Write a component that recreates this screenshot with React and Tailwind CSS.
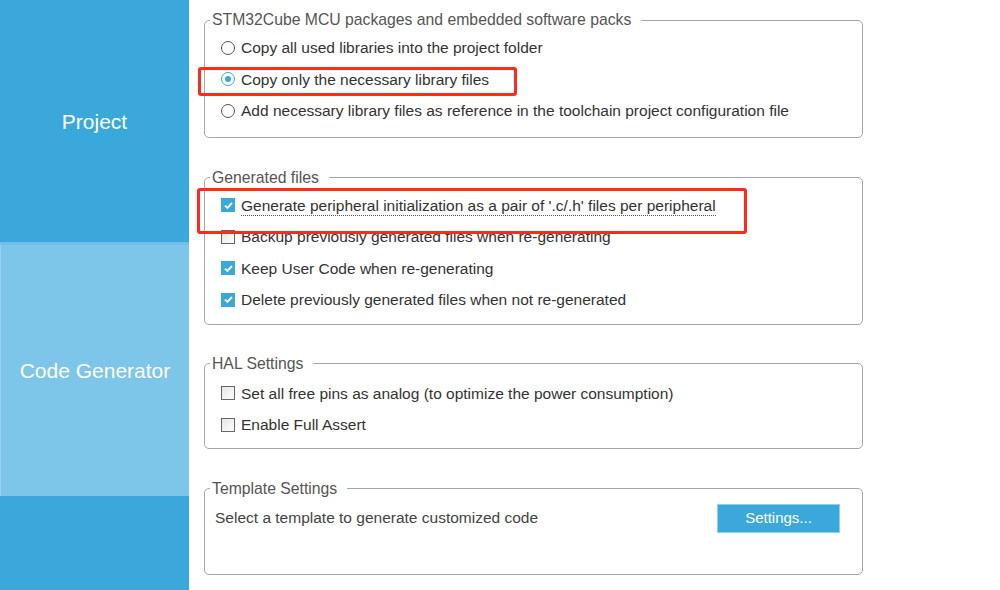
import React from "react";

const font = { fontFamily: '"Liberation Sans", Arial, sans-serif' };

function Radio({ checked }) {
  return (
    <span
      className={
        "flex h-[14px] w-[14px] shrink-0 items-center justify-center rounded-full border-[1.5px] bg-white " +
        (checked ? "border-[#3aa8db]" : "border-[#555]")
      }
    >
      {checked && <span className="h-[6px] w-[6px] rounded-full bg-[#3aa8db]" />}
    </span>
  );
}

function Check({ checked }) {
  if (checked) {
    return (
      <span className="flex h-[14px] w-[14px] shrink-0 items-center justify-center bg-[#3aa8db]">
        <svg width="11" height="11" viewBox="0 0 11 11">
          <path d="M2 5.6 L4.4 8 L9 3" fill="none" stroke="white" strokeWidth="1.9" />
        </svg>
      </span>
    );
  }
  return <span className="h-[14px] w-[14px] shrink-0 border border-[#666] bg-gradient-to-br from-[#e4e4e4] to-white" />;
}

function Row({ control, children }) {
  return (
    <div className="flex h-[31.5px] items-center gap-[6px] pl-[16px] text-[15.5px] text-[#333]">
      {control}
      <span>{children}</span>
    </div>
  );
}

function Group({ title, className, children }) {
  return (
    <fieldset className={"w-[659px] rounded-[5px] border border-[#a3a7ab] " + className}>
      <legend className="ml-[5px] pl-[2px] pr-[10px] text-[15.75px] leading-[18px] text-[#555]">{title}</legend>
      {children}
    </fieldset>
  );
}

export default function App() {
  return (
    <div className="relative flex h-[590px] w-[1000px] overflow-hidden bg-white" style={font}>
      <div className="flex w-[189px] shrink-0 flex-col bg-[#3aa8db]">
        <div className="flex h-[242px] items-center justify-center pt-[2px] text-[21px] text-white">Project</div>
        <div className="h-[3px] bg-[#6ec2ea]" />
        <div className="flex h-[251px] items-center justify-center border-l border-[#9ad3ee] bg-[#7dc5e9] text-[21px] text-white">
          Code Generator
        </div>
        <div className="flex-1" />
      </div>

      <div className="flex flex-col pl-[15px] pt-[11px]">
        <Group title="STM32Cube MCU packages and embedded software packs" className="pt-[3px] pb-[10px]">
          <Row control={<Radio />}>Copy all used libraries into the project folder</Row>
          <Row control={<Radio checked />}>Copy only the necessary library files</Row>
          <Row control={<Radio />}>Add necessary library files as reference in the toolchain project configuration file</Row>
        </Group>

        <Group title="Generated files" className="mt-[31px] pt-[3px] pb-[8px]">
          <Row control={<Check checked />}>
            <span className="border-b border-dotted border-[#555] pb-[1px]">
              Generate peripheral initialization as a pair of '.c/.h' files per peripheral
            </span>
          </Row>
          <Row control={<Check />}>Backup previously generated files when re-generating</Row>
          <Row control={<Check checked />}>Keep User Code when re-generating</Row>
          <Row control={<Check checked />}>Delete previously generated files when not re-generated</Row>
        </Group>

        <Group title="HAL Settings" className="mt-[30px] pt-[5px] pb-[7px]">
          <Row control={<Check />}>Set all free pins as analog (to optimize the power consumption)</Row>
          <Row control={<Check />}>Enable Full Assert</Row>
        </Group>

        <Group title="Template Settings" className="mt-[31px] pb-[41px]">
          <div className="flex items-center justify-between pl-[10px] pr-[22px] pt-[6px] text-[15.5px] text-[#444]">
            <span>Select a template to generate customized code</span>
            <button className="h-[29px] w-[123px] border border-[#8fd0ef] bg-[#3aa8db] text-[15px] text-white">
              Settings...
            </button>
          </div>
        </Group>
      </div>

      <div className="pointer-events-none absolute left-[198px] top-[67px] h-[29px] w-[319px] rounded-[3px] border-[3px] border-[#ff2a1a]" />
      <div className="pointer-events-none absolute left-[197px] top-[188px] h-[46px] w-[550px] rounded-[3px] border-[3px] border-[#ff2a1a]" />
    </div>
  );
}
